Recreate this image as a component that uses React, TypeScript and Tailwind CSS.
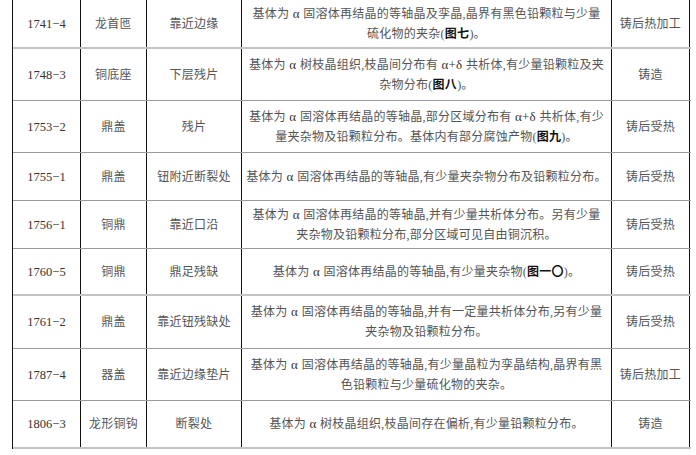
import type { ReactNode } from "react";

type Row = {
  id: string;
  name: string;
  spot: string;
  desc: ReactNode;
  process: string;
  h: string;
  line: string;
};

const Fig = ({ children }: { children: ReactNode }) => (
  <b className="font-bold text-[#111]">{children}</b>
);

const A = ({ t = "α" }: { t?: string }) => (
  <span className="font-['Liberation_Serif'] text-[13px] text-[#333]"> {t} </span>
);

const rows: Row[] = [
  {
    id: "1741−4",
    name: "龙首匜",
    spot: "靠近边缘",
    desc: (
      <>
        基体为<A />固溶体再结晶的等轴晶及孪晶,晶界有黑色铅颗粒与少量
        <br />
        硫化物的夹杂(<Fig>图七</Fig>)。
      </>
    ),
    process: "铸后热加工",
    h: "h-[49px]",
    line: "border-b-2 border-[#c4c4c4]",
  },
  {
    id: "1748−3",
    name: "铜底座",
    spot: "下层残片",
    desc: (
      <>
        基体为<A />树枝晶组织,枝晶间分布有<A t="α+δ" />共析体,有少量铅颗粒及夹
        <br />
        杂物分布(<Fig>图八</Fig>)。
      </>
    ),
    process: "铸造",
    h: "h-[52px]",
    line: "border-b border-[#9a9a9a]",
  },
  {
    id: "1753−2",
    name: "鼎盖",
    spot: "残片",
    desc: (
      <>
        基体为<A />固溶体再结晶的等轴晶,部分区域分布有<A t="α+δ" />共析体,有少
        <br />
        量夹杂物及铅颗粒分布。基体内有部分腐蚀产物(<Fig>图九</Fig>)。
      </>
    ),
    process: "铸后受热",
    h: "h-[52px]",
    line: "border-b border-[#9a9a9a]",
  },
  {
    id: "1755−1",
    name: "鼎盖",
    spot: "钮附近断裂处",
    desc: (
      <>
        基体为<A />固溶体再结晶的等轴晶,有少量夹杂物分布及铅颗粒分布。
      </>
    ),
    process: "铸后受热",
    h: "h-[48px]",
    line: "border-b border-[#9a9a9a]",
  },
  {
    id: "1756−1",
    name: "铜鼎",
    spot: "靠近口沿",
    desc: (
      <>
        基体为<A />固溶体再结晶的等轴晶,并有少量共析体分布。另有少量
        <br />
        夹杂物及铅颗粒分布,部分区域可见自由铜沉积。
      </>
    ),
    process: "铸后受热",
    h: "h-[48px]",
    line: "border-b border-[#9a9a9a]",
  },
  {
    id: "1760−5",
    name: "铜鼎",
    spot: "鼎足残缺",
    desc: (
      <>
        基体为<A />固溶体再结晶的等轴晶,有少量夹杂物(<Fig>图一〇</Fig>)。
      </>
    ),
    process: "铸后受热",
    h: "h-[47px]",
    line: "border-b-2 border-[#c4c4c4]",
  },
  {
    id: "1761−2",
    name: "鼎盖",
    spot: "靠近钮残缺处",
    desc: (
      <>
        基体为<A />固溶体再结晶的等轴晶,并有一定量共析体分布,另有少量
        <br />
        夹杂物及铅颗粒分布。
      </>
    ),
    process: "铸后受热",
    h: "h-[53px]",
    line: "border-b border-[#9a9a9a]",
  },
  {
    id: "1787−4",
    name: "器盖",
    spot: "靠近边缘垫片",
    desc: (
      <>
        基体为<A />固溶体再结晶的等轴晶,有少量晶粒为孪晶结构,晶界有黑
        <br />
        色铅颗粒与少量硫化物的夹杂。
      </>
    ),
    process: "铸后热加工",
    h: "h-[52px]",
    line: "border-b border-[#9a9a9a]",
  },
  {
    id: "1806−3",
    name: "龙形铜钩",
    spot: "断裂处",
    desc: (
      <>
        基体为<A />树枝晶组织,枝晶间存在偏析,有少量铅颗粒分布。
      </>
    ),
    process: "铸造",
    h: "h-[48px]",
    line: "border-b-2 border-[#c4c4c4]",
  },
];

const cell =
  "flex items-center justify-center whitespace-nowrap text-center border-r-[1.5px] border-r-[#111]";

export default function App() {
  return (
    <div className="h-[455px] w-[696px] overflow-hidden bg-white font-['Liberation_Serif','Noto_Sans_CJK_SC',serif] text-[12px] leading-[20px] tracking-[0.25px] text-[#555]">
      <div className="ml-[12px] w-[679px] border-l-[1.5px] border-[#111]">
        {rows.map((r) => (
          <div
            key={r.id}
            className={`grid grid-cols-[68px_66px_95px_370px_78px] ${r.h} ${r.line}`}
          >
            <div className={`${cell} text-[12.5px] tracking-normal text-[#333]`}>{r.id}</div>
            <div className={cell}>{r.name}</div>
            <div className={cell}>{r.spot}</div>
            <div className={cell}>
              <p>{r.desc}</p>
            </div>
            <div className={cell}>{r.process}</div>
          </div>
        ))}
      </div>
    </div>
  );
}
